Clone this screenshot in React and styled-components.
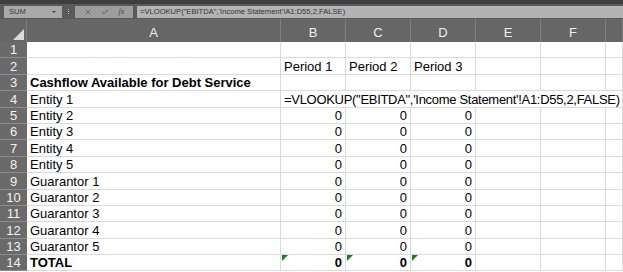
import React from "react";
import styled, { createGlobalStyle } from "styled-components";
import { X, Check } from "lucide-react";

const GlobalStyle = createGlobalStyle`
    html, body {
        margin: 0;
        padding: 0;
        background: #ffffff;
        overflow: hidden;
    }
    body {
        font-family: "Liberation Sans", Arial, sans-serif;
    }
`;

const Window = styled.div`
    width: 623px;
    height: 272px;
    overflow: hidden;
    display: flex;
    flex-direction: column;
`;

const FormulaBar = styled.div`
    height: 19px;
    box-sizing: border-box;
    background: #595959;
    border-top: 4px solid #3e3e3e;
    display: flex;
    align-items: center;
    padding: 0 0 0 4px;
`;

const NameBox = styled.div`
    width: 58px;
    height: 12px;
    background: #a9a9a9;
    display: flex;
    align-items: center;
    justify-content: space-between;
    padding: 0 6px 0 5px;
    box-sizing: border-box;
    font-size: 7.5px;
    color: #3a3a3a;
`;

const Caret = styled.span`
    width: 0;
    height: 0;
    border-left: 2px solid transparent;
    border-right: 2px solid transparent;
    border-top: 2px solid #444;
`;

const Grip = styled.div`
    width: 13px;
    display: flex;
    flex-direction: column;
    align-items: center;
    gap: 1px;
    span {
        width: 1px;
        height: 1px;
        background: #bdbdbd;
    }
`;

const ButtonGroup = styled.div`
    width: 58px;
    height: 12px;
    background: #9d9d9d;
    display: flex;
    align-items: center;
    justify-content: space-around;
    padding: 0 4px;
    box-sizing: border-box;
    color: #4a4a4a;
`;

const Fx = styled.span`
    font-family: "Liberation Serif", serif;
    font-style: italic;
    font-size: 8px;
    color: #4a4a4a;
`;

const FormulaInput = styled.div`
    flex: 1;
    height: 12px;
    margin-left: 4px;
    background: #b3b3b3;
    font-size: 7.6px;
    line-height: 12px;
    color: #333333;
    padding-left: 3px;
    white-space: nowrap;
    overflow: hidden;
`;

const Sheet = styled.div`
    display: grid;
    grid-template-columns: 27px 254px 65px 65px 65px 65px 65px 1fr;
    grid-template-rows: 23px repeat(14, 16.4px);
`;

const Corner = styled.div`
    background: #666666;
    border-right: 1px solid #7c7c7c;
    position: relative;
    &::after {
        content: "";
        position: absolute;
        right: 2px;
        bottom: 2px;
        width: 0;
        height: 0;
        border-left: 11px solid transparent;
        border-bottom: 11px solid #dcdcdc;
    }
`;

const ColHead = styled.div`
    background: #666666;
    border-right: 1px solid #808080;
    color: #f0f0f0;
    font-size: 13px;
    display: flex;
    align-items: center;
    justify-content: center;
    padding-top: 3px;
`;

const RowHead = styled.div`
    background: #6a6a6a;
    border-bottom: 1px solid #8c8c8c;
    color: #f2f2f2;
    font-size: 13px;
    display: flex;
    align-items: flex-end;
    justify-content: center;
    box-sizing: border-box;
    line-height: 14px;
`;

const Cell = styled.div`
    position: relative;
    border-right: 1px solid #dadada;
    border-bottom: 1px solid #dadada;
    box-sizing: border-box;
    font-size: 13px;
    color: #000;
    font-weight: ${(p) => (p.$bold ? 700 : 400)};
    letter-spacing: ${(p) => (p.$tight ? "-0.3px" : "normal")};
    display: flex;
    align-items: flex-end;
    justify-content: ${(p) => (p.$num ? "flex-end" : "flex-start")};
    padding: 0 3px;
    line-height: 14px;
    white-space: nowrap;
    grid-column: ${(p) => p.$span || "auto"};
`;

const Flag = styled.span`
    position: absolute;
    left: 1px;
    top: 0;
    width: 0;
    height: 0;
    border-top: 6px solid #12801a;
    border-right: 6px solid transparent;
`;

const columns = ["A", "B", "C", "D", "E", "F", ""];

const labels = [
    "",
    "",
    "Cashflow Available for Debt Service",
    "Entity 1",
    "Entity 2",
    "Entity 3",
    "Entity 4",
    "Entity 5",
    "Guarantor 1",
    "Guarantor 2",
    "Guarantor 3",
    "Guarantor 4",
    "Guarantor 5",
    "TOTAL",
];

const formula = "=VLOOKUP(\"EBITDA\",'Income Statement'!A1:D55,2,FALSE)";

const renderRow = (idx) => {
    const n = idx + 1;
    const bold = n === 3 || n === 14;
    const cells = [
        <RowHead key="h">{n}</RowHead>,
        <Cell key="a" $bold={bold}>
            {labels[idx]}
        </Cell>,
    ];

    if (n === 4) {
        cells.push(
            <Cell key="f" $span="3 / -1" $tight>
                {formula}
            </Cell>
        );
        return cells;
    }

    ["B", "C", "D", "E", "F", "G"].forEach((col, ci) => {
        const isPeriod = ci < 3;
        let content = "";
        let num = false;
        if (n === 2 && isPeriod) content = `Period ${ci + 1}`;
        if (n >= 5 && isPeriod) {
            content = "0";
            num = true;
        }
        cells.push(
            <Cell key={col} $num={num} $bold={n === 14}>
                {n === 14 && isPeriod && <Flag />}
                {content}
            </Cell>
        );
    });
    return cells;
};

const App = () => {
    return (
        <Window>
            <GlobalStyle />
            <FormulaBar>
                <NameBox>
                    <span>SUM</span>
                    <Caret />
                </NameBox>
                <Grip>
                    <span />
                    <span />
                    <span />
                </Grip>
                <ButtonGroup>
                    <X size={8} strokeWidth={2} />
                    <Check size={8} strokeWidth={2.5} />
                    <Fx>fx</Fx>
                </ButtonGroup>
                <FormulaInput>{formula}</FormulaInput>
            </FormulaBar>
            <Sheet>
                <Corner />
                {columns.map((c, i) => (
                    <ColHead key={i}>{c}</ColHead>
                ))}
                {labels.map((_, idx) => renderRow(idx))}
            </Sheet>
        </Window>
    );
};

export default App;
